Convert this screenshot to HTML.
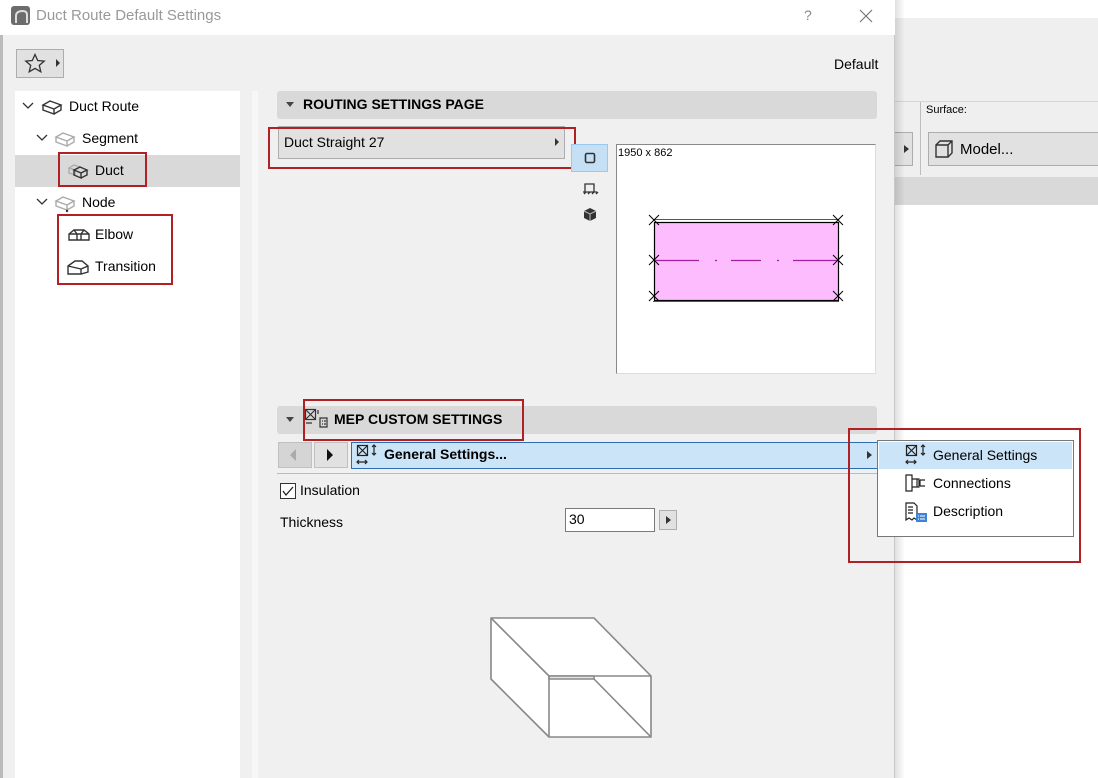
<!DOCTYPE html>
<html><head><meta charset="utf-8"><style>
*{margin:0;padding:0;box-sizing:border-box}
body{width:1098px;height:778px;overflow:hidden;position:relative;background:#fff;font-family:"Segoe UI","Liberation Sans",sans-serif;font-size:14px;color:#000}
.a{position:absolute}
.red{position:absolute;border:2px solid #b02025}
.t{position:absolute;white-space:nowrap}
</style></head><body>
<!-- background app -->
<div class="a" style="left:895px;top:18px;width:203px;height:83px;background:#efefef"></div>
<div class="a" style="left:895px;top:101px;width:203px;height:1px;background:#d6d6d6"></div>
<div class="a" style="left:895px;top:102px;width:203px;height:75px;background:#efefef"></div>
<div class="a" style="left:920px;top:102px;width:1px;height:73px;background:#bdbdbd"></div>
<div class="t" style="left:926px;top:104px;font-size:11px">Surface:</div>
<div class="a" style="left:895px;top:132px;width:18px;height:34px;background:#e1e1e1;border:1px solid #adadad;border-left:none"></div>
<div class="a" style="left:904px;top:145px;border-left:5px solid #333;border-top:4px solid transparent;border-bottom:4px solid transparent"></div>
<div class="a" style="left:928px;top:132px;width:170px;height:34px;background:#e1e1e1;border:1px solid #adadad;border-right:none"></div>
<svg class="a" style="left:934px;top:139px" width="20" height="20" viewBox="0 0 20 20"><path d="M2 6h12v12H2zM2 6l4-4h12v12l-4 4M14 6l4-4" fill="none" stroke="#333" stroke-width="1.4"/></svg>
<div class="t" style="left:960px;top:141px;font-size:15px">Model...</div>
<div class="a" style="left:895px;top:177px;width:203px;height:28px;background:#d9d9d9"></div>
<div class="a" style="left:895px;top:0;width:10px;height:778px;background:linear-gradient(to right,rgba(0,0,0,.12),rgba(0,0,0,0))"></div>

<!-- dialog -->
<div class="a" style="left:0;top:0;width:895px;height:778px;background:#f0f0f0;border-right:1px solid #c8c8c8"></div>
<div class="a" style="left:0;top:0;width:895px;height:35px;background:#fff"></div>
<div class="a" style="left:11px;top:6px;width:19px;height:19px;background:#6c6c6c;border-radius:3px"></div>
<svg class="a" style="left:11px;top:6px" width="19" height="19"><path d="M5 17V10Q5 5 12 5Q16 5 16 9V17" fill="none" stroke="#ddd" stroke-width="2"/></svg>
<div class="t" style="left:36px;top:7px;font-size:15px;color:#999">Duct Route Default Settings</div>
<div class="t" style="left:804px;top:7px;font-size:14px;color:#888">?</div>
<svg class="a" style="left:859px;top:9px" width="14" height="14"><path d="M1 1L13 13M13 1L1 13" stroke="#777" stroke-width="1.2"/></svg>
<div class="a" style="left:0;top:35px;width:3px;height:743px;background:#bbb"></div>

<!-- favorites -->
<div class="a" style="left:16px;top:49px;width:48px;height:29px;background:#e1e1e1;border:1px solid #adadad"></div>
<svg class="a" style="left:24px;top:53px" width="22" height="21" viewBox="0 0 22 21"><path d="M11 1.5l2.7 6 6.5.6-4.9 4.3 1.5 6.4L11 15.4 5.2 18.8l1.5-6.4L1.8 8.1l6.5-.6z" fill="none" stroke="#333" stroke-width="1.3"/></svg>
<div class="a" style="left:56px;top:59px;border-left:4px solid #333;border-top:4px solid transparent;border-bottom:4px solid transparent"></div>
<div class="t" style="left:834px;top:56px;font-size:14px">Default</div>

<!-- tree -->
<div class="a" style="left:15px;top:91px;width:225px;height:687px;background:#fff"></div>
<div class="a" style="left:15px;top:155px;width:225px;height:32px;background:#d9d9d9"></div>
<div class="a" style="left:252px;top:91px;width:6px;height:687px;background:#f7f7f7"></div>
<svg class="a" style="left:0;top:0" width="240" height="290">
<g fill="none" stroke="#333" stroke-width="1.3">
<path d="M23 103l5 5 5-5M37 135l5 5 5-5M37 199l5 5 5-5"/>
</g>
<g fill="none" stroke="#333" stroke-width="1.4" transform="translate(42,99)"><path d="M1 6L8 2L19 6L12 10ZM1 6V11L12 15V10M12 15L19 11V6"/></g>
<g fill="none" stroke="#aaa" stroke-width="1.4" transform="translate(55,131)"><path d="M1 6L8 2L19 6L12 10ZM1 6V11L12 15V10M12 15L19 11V6"/></g>
<g fill="none" stroke="#aaa" stroke-width="1.4" transform="translate(55,195)"><path d="M1 6L8 2L19 6L12 10ZM1 6V11L12 15V10M12 15L19 11V6"/></g>
<circle cx="67" cy="211" r="1.2" fill="#333"/>
<g fill="none" stroke="#aaa" stroke-width="1.3" transform="translate(68,163)"><path d="M1 5L6 2L12 4L7 7ZM1 5V10L7 12V7"/></g>
<g fill="none" stroke="#333" stroke-width="1.4" transform="translate(73,165)"><path d="M1 5L7 2L14 5L8 8ZM1 5V10L8 13V8M8 13L14 10V5"/></g>
<g fill="none" stroke="#333" stroke-width="1.4" transform="translate(68,227)"><path d="M1 7L6 3H16L21 7V13H1ZM1 7H21M6 3L9 7V13M16 3L13 7V13"/></g>
<g fill="none" stroke="#333" stroke-width="1.4" transform="translate(67,259)"><path d="M1 7L8 2H15L21 7V13L14 15H1ZM1 7L14 10V15M14 10L21 7"/></g>
</svg>
<div class="t" style="left:69px;top:98px">Duct Route</div>
<div class="t" style="left:82px;top:130px">Segment</div>
<div class="t" style="left:95px;top:162px">Duct</div>
<div class="t" style="left:82px;top:194px">Node</div>
<div class="t" style="left:95px;top:226px">Elbow</div>
<div class="t" style="left:95px;top:258px">Transition</div>
<div class="red" style="left:58px;top:152px;width:89px;height:35px"></div>
<div class="red" style="left:57px;top:214px;width:116px;height:71px"></div>

<!-- routing header -->
<div class="a" style="left:277px;top:91px;width:600px;height:28px;background:#d9d9d9;border-radius:3px"></div>
<div class="a" style="left:286px;top:102px;border-top:5px solid #444;border-left:4px solid transparent;border-right:4px solid transparent"></div>
<div class="t" style="left:303px;top:96px;font-weight:bold;font-size:14px">ROUTING SETTINGS PAGE</div>
<div class="a" style="left:278px;top:126px;width:287px;height:33px;background:#e1e1e1;border:1px solid #adadad"></div>
<div class="t" style="left:284px;top:134px;font-size:14px">Duct Straight 27</div>
<div class="a" style="left:555px;top:138px;border-left:4px solid #333;border-top:4px solid transparent;border-bottom:4px solid transparent"></div>
<div class="red" style="left:268px;top:127px;width:308px;height:42px"></div>
<div class="a" style="left:571px;top:144px;width:37px;height:28px;background:#c5dff5;border:1px solid #99c9ef"></div>
<svg class="a" style="left:578px;top:145px" width="26" height="82">
<rect x="7.5" y="8.5" width="9" height="9" rx="1.5" fill="none" stroke="#333" stroke-width="1.6"/>
<path d="M7 47v-8h9v8M5 47h14M6 49l2-2M10 49l2-2M14 49l2-2M18 49l2-2" fill="none" stroke="#333" stroke-width="1.3"/>
<path d="M12 63l6 3v7l-6 3-6-3v-7z" fill="#333"/><path d="M6 66l6 3 6-3M12 69v7" stroke="#bbb" fill="none"/>
</svg>
<div class="a" style="left:616px;top:144px;width:260px;height:230px;background:#fff;border:1px solid #888;border-right-color:#ddd;border-bottom-color:#ddd"></div>
<div class="t" style="left:618px;top:147px;font-size:11px">1950 x 862</div>
<svg class="a" style="left:616px;top:144px" width="260" height="230">
<rect x="38.5" y="78.5" width="184" height="78" fill="#fdbcfd" stroke="#000" stroke-width="1.2"/>
<path d="M37 75.5h186M37 157.5h186" stroke="#555"/>
<path d="M38 116.5h45M99 116.5h2M115 116.5h30M161 116.5h2M177 116.5h45" stroke="#a020a0" stroke-width="1.2"/>
<g stroke="#000" stroke-width="1"><path d="M33 71l10 10M43 71l-10 10M217 71l10 10M227 71l-10 10M33 111l10 10M43 111l-10 10M217 111l10 10M227 111l-10 10M33 147l10 10M43 147l-10 10M217 147l10 10M227 147l-10 10"/></g>
</svg>

<!-- MEP header -->
<div class="a" style="left:277px;top:406px;width:600px;height:28px;background:#d9d9d9;border-radius:3px"></div>
<div class="a" style="left:286px;top:417px;border-top:5px solid #444;border-left:4px solid transparent;border-right:4px solid transparent"></div>
<svg class="a" style="left:304px;top:408px" width="24" height="22"><g fill="none" stroke="#333" stroke-width="1.2"><rect x="1.5" y="1.5" width="10" height="10"/><path d="M2 2l9 9M11 2l-9 9M14 2v4M2 15h6M16 10h7v9h-7zM18 13h1M18 16h1M20 13h2M20 16h2"/></g></svg>
<div class="t" style="left:334px;top:411px;font-weight:bold;font-size:14px">MEP CUSTOM SETTINGS</div>
<div class="red" style="left:303px;top:399px;width:221px;height:42px"></div>
<div class="a" style="left:278px;top:442px;width:34px;height:26px;background:#d5d5d5;border:1px solid #c0c0c0"></div>
<div class="a" style="left:290px;top:449px;border-right:6px solid #aaa;border-top:6px solid transparent;border-bottom:6px solid transparent"></div>
<div class="a" style="left:314px;top:442px;width:34px;height:26px;background:#e1e1e1;border:1px solid #c0c0c0"></div>
<div class="a" style="left:327px;top:449px;border-left:6px solid #111;border-top:6px solid transparent;border-bottom:6px solid transparent"></div>
<div class="a" style="left:351px;top:442px;width:526px;height:27px;background:#cce4f7;border:1px solid #2a6db0;border-right:none"></div>
<svg class="a" style="left:355px;top:443px" width="26" height="24"><g fill="none" stroke="#222" stroke-width="1.2"><rect x="2.5" y="2.5" width="10" height="10"/><path d="M3 3l9 9M12 3l-9 9M19 2v10M17 4l2-2 2 2M17 10l2 2 2-2M2 19h10M4 17l-2 2 2 2M10 17l2 2-2 2"/></g></svg>
<div class="t" style="left:384px;top:446px;font-weight:bold;font-size:14px">General Settings...</div>
<div class="a" style="left:867px;top:451px;border-left:5px solid #333;border-top:4px solid transparent;border-bottom:4px solid transparent"></div>
<div class="a" style="left:277px;top:473px;width:600px;height:1px;background:#bbb"></div>
<div class="a" style="left:280px;top:483px;width:16px;height:16px;background:#fff;border:1px solid #333"></div>
<svg class="a" style="left:280px;top:483px" width="16" height="16"><path d="M3 8l3 4 7-8" fill="none" stroke="#222" stroke-width="1.3"/></svg>
<div class="t" style="left:300px;top:482px">Insulation</div>
<div class="t" style="left:280px;top:514px">Thickness</div>
<div class="a" style="left:565px;top:508px;width:90px;height:24px;background:#fff;border:1px solid #7a7a7a"></div>
<div class="t" style="left:569px;top:511px;font-size:14px">30</div>
<div class="a" style="left:659px;top:510px;width:18px;height:20px;background:#e1e1e1;border:1px solid #adadad"></div>
<div class="a" style="left:666px;top:516px;border-left:5px solid #333;border-top:4px solid transparent;border-bottom:4px solid transparent"></div>
<svg class="a" style="left:470px;top:600px" width="200" height="150"><g stroke="#888" stroke-width="1.6" fill="#fff" stroke-linejoin="round"><path d="M21 18h103l57 58v61H79L21 79z"/><path d="M21 18l58 58h102M79 76v61M124 79l57 58" fill="none"/><path d="M79 76h45v3H79z" fill="#e4e4e4"/></g></svg>

<!-- popup menu -->
<div class="a" style="left:877px;top:440px;width:197px;height:97px;background:#fff;border:1px solid #777"></div>
<div class="a" style="left:879px;top:442px;width:193px;height:27px;background:#cce4f7"></div>
<svg class="a" style="left:904px;top:443px" width="26" height="82"><g fill="none" stroke="#222" stroke-width="1.2"><rect x="2.5" y="2.5" width="10" height="10"/><path d="M3 3l9 9M12 3l-9 9M19 2v10M17 4l2-2 2 2M17 10l2 2 2-2M2 19h10M4 17l-2 2 2 2M10 17l2 2-2 2"/>
<path d="M2 32h6v16H2zM8 36h5v8H8M13 36h2v8h-2M16 37h5M16 43h5M16 37v6"/>
<path d="M2 60h8l3 3v14l-3-2-2 2-3-2-3 2zM4 64h5M4 67h5M4 70h5"/></g>
<rect x="12" y="70" width="11" height="9" fill="#3b82d8"/><path d="M14 73h1M14 76h1M16 73h5M16 76h5" stroke="#fff"/></svg>
<div class="t" style="left:933px;top:447px">General Settings</div>
<div class="t" style="left:933px;top:475px">Connections</div>
<div class="t" style="left:933px;top:503px">Description</div>
<div class="red" style="left:848px;top:428px;width:233px;height:135px"></div>
</body></html>
